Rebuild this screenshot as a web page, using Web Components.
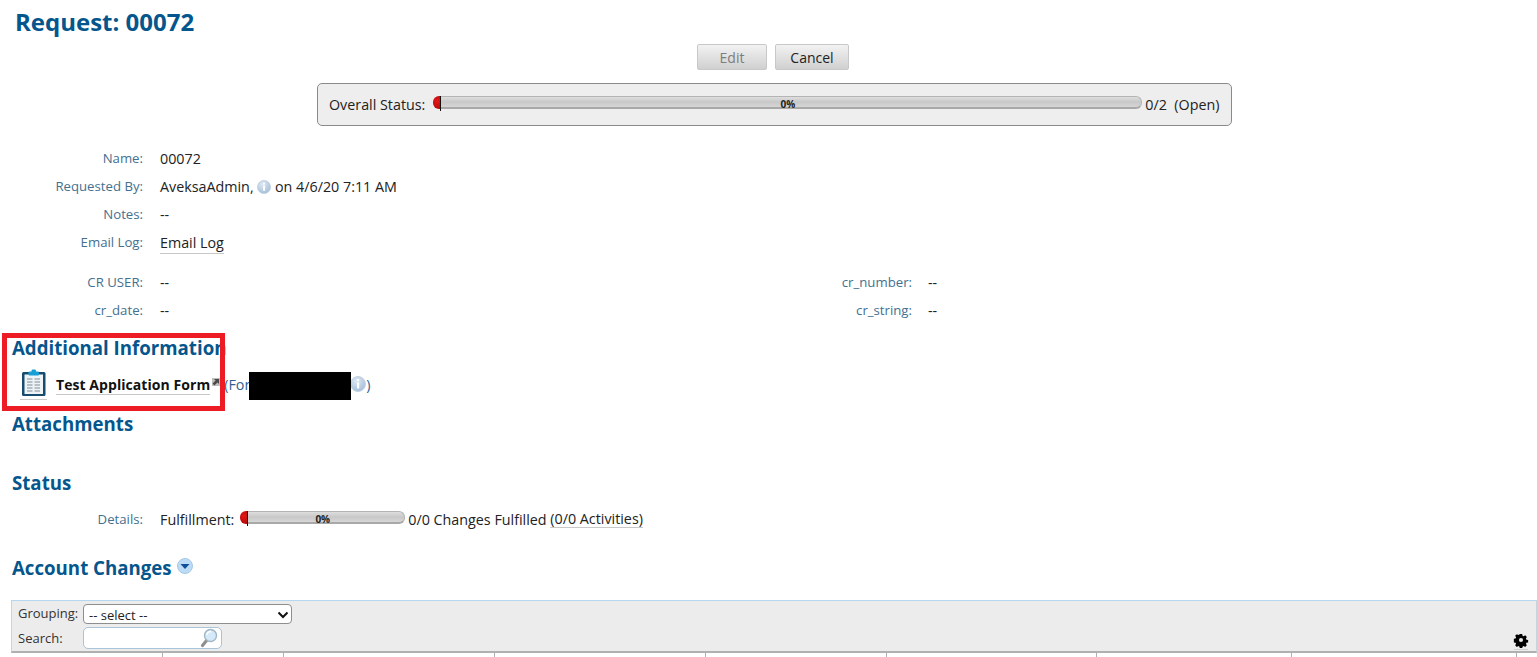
<!DOCTYPE html>
<html>
<head>
<meta charset="utf-8">
<title>Request: 00072</title>
<style>
  html, body { margin: 0; padding: 0; background: #fff; height: 657px; overflow: hidden; }
  body { font-family: "Open Sans", "Liberation Sans", sans-serif; }
</style>
</head>
<body>
<request-page></request-page>

<script>
const infoSvg = size => `
  <svg width="${size}" height="${size}" viewBox="0 0 16 16" style="display:block">
    <defs><radialGradient id="ig" cx="40%" cy="30%" r="80%">
      <stop offset="0" stop-color="#dfe9f4"/><stop offset="1" stop-color="#9db9d6"/>
    </radialGradient></defs>
    <circle cx="8" cy="8" r="7.5" fill="url(#ig)" stroke="#c3d2e2" stroke-width="1"/>
    <rect x="7" y="3" width="2.2" height="2.2" fill="#fff"/>
    <rect x="7" y="6.4" width="2.2" height="6" fill="#fff"/>
  </svg>`;

class InfoIcon extends HTMLElement {
  constructor () {
    super();
    this.attachShadow({ mode: 'open' });
    const size = this.getAttribute('size') || 14;
    this.shadowRoot.innerHTML = `
      <style>:host { display: inline-block; vertical-align: -2px; }</style>
      ${infoSvg(size)}`;
  }
}

class PlainButton extends HTMLElement {
  constructor () {
    super();
    this.attachShadow({ mode: 'open' });
    this.shadowRoot.innerHTML = `
      <style>
        :host {
          display: inline-flex;
          align-items: center;
          justify-content: center;
          box-sizing: border-box;
          height: 26px;
          font-size: 14px;
          color: #222;
          border: 1px solid #c8c8c8;
          border-radius: 2px;
          background: linear-gradient(#f2f2f2, #d0d0d0);
        }
        :host([disabled]) { color: #7d7d7d; }
      </style>
      <slot></slot>`;
  }
}

class StatusBar extends HTMLElement {
  constructor () {
    super();
    this.attachShadow({ mode: 'open' });
    this.shadowRoot.innerHTML = `
      <style>
        :host {
          display: inline-block;
          position: relative;
          box-sizing: border-box;
          height: 13px;
          margin-left: 7px;
          margin-bottom: 4px;
          padding-right: 6px;
          border-top: 1px solid #b4b4b4;
          border-bottom: 2px solid #a8a8a8;
          border-right: 1px solid #b4b4b4;
          border-radius: 0 6px 6px 0;
          background: linear-gradient(#dedede, #c8c8c8 50%, #d6d6d6);
          font-size: 10px;
          font-weight: 700;
          line-height: 14px;
          text-align: center;
          color: #222;
        }
        .cap {
          position: absolute;
          left: -7px;
          top: -1px;
          width: 7px;
          height: 13px;
          border-radius: 6px 0 0 6px;
          background: radial-gradient(circle at 60% 40%, #e41818, #b00606);
        }
        .tick {
          position: absolute;
          left: 0;
          top: -1px;
          width: 1px;
          height: 15px;
          background: #111;
        }
      </style>
      <span class="cap"></span><span class="tick"></span><slot></slot>`;
  }
}

class FieldRow extends HTMLElement {
  constructor () {
    super();
    this.attachShadow({ mode: 'open' });
    this.shadowRoot.innerHTML = `
      <style>
        :host {
          display: grid;
          grid-template-columns: 143px 1fr;
          column-gap: 17px;
          height: 28px;
          align-items: center;
          font-size: 14.3px;
          color: #222;
        }
        .label {
          font-size: 13.2px;
          color: #44708f;
          text-align: right;
        }
      </style>
      <div class="label"><slot name="label"></slot></div>
      <div><slot></slot></div>`;
  }
}

class SectionHeading extends HTMLElement {
  constructor () {
    super();
    this.attachShadow({ mode: 'open' });
    this.shadowRoot.innerHTML = `
      <style>
        :host {
          display: block;
          margin-left: 12px;
          font-size: 18.67px;
          font-weight: 700;
          line-height: 26px;
          color: #04568c;
        }
      </style>
      <slot></slot>`;
  }
}

class DataToolbar extends HTMLElement {
  constructor () {
    super();
    this.attachShadow({ mode: 'open' });
    const ticks = [162, 283, 494, 705, 886, 1096, 1291, 1516]
      .map(x => `<i style="left:${x - 12}px"></i>`).join('');
    this.shadowRoot.innerHTML = `
      <style>
        :host {
          display: block;
          position: relative;
          box-sizing: border-box;
          margin-left: 11px;
          height: 53px;
          background: #ececec;
          border-top: 1px solid #b5d7f0;
          border-left: 1px solid #c6d4de;
          border-right: 1px solid #c6d4de;
          border-bottom: 2px solid #b0b0b0;
          font-size: 13px;
          color: #333;
        }
        .rows {
          display: grid;
          grid-template-columns: 65px 209px;
          row-gap: 3px;
          padding: 3px 0 0 6px;
          align-items: center;
        }
        .select {
          display: flex;
          align-items: center;
          justify-content: space-between;
          box-sizing: border-box;
          height: 20px;
          padding: 1px 2px 0 5px;
          background: #fff;
          border: 1px solid #8e8e8e;
          border-radius: 4px;
          font-size: 13px;
          color: #222;
        }
        .search {
          display: flex;
          align-items: center;
          justify-content: flex-end;
          box-sizing: border-box;
          width: 139px;
          height: 22px;
          padding-right: 3px;
          background: #fff;
          border: 1px solid #a9c4d8;
          border-radius: 5px;
        }
        .gear { position: absolute; right: 7px; bottom: 3px; }
        .gear-line { position: absolute; right: 8px; bottom: 1px; width: 14px; height: 1px; background: #cfcfcf; }
        i {
          position: absolute;
          top: 100%;
          margin-top: 2px;
          width: 1px;
          height: 6px;
          background: #b0b0b0;
        }
      </style>
      <div class="rows">
        <span style="margin-top:-3px">Grouping:</span>
        <div class="select">-- select --
          <svg width="12" height="8" viewBox="0 0 12 8"><path d="M1.5 1.5 6 6l4.5-4.5" fill="none" stroke="#111" stroke-width="2"/></svg>
        </div>
        <span>Search:</span>
        <div class="search">
          <svg width="18" height="20" viewBox="0 0 18 20">
            <line x1="2.5" y1="17.5" x2="7" y2="12" stroke="#8f8f8f" stroke-width="3.2" stroke-linecap="round"/>
            <circle cx="10.5" cy="7.5" r="6" fill="#d6e9f8" stroke="#9fb6c6" stroke-width="1.4"/>
            <path d="M7 7a4 4 0 0 1 4-3.5" fill="none" stroke="#fff" stroke-width="1.4"/>
          </svg>
        </div>
      </div>
      <svg class="gear" width="16" height="16" viewBox="0 0 16 16">
        <path fill="#000" fill-rule="evenodd" d="M6.6 1h2.8l.4 2 1.3.6 1.8-1.1 2 2-1.1 1.8.6 1.3 2 .4v2.8l-2 .4-.6 1.3 1.1 1.8-2 2-1.8-1.1-1.3.6-.4 2H6.6l-.4-2-1.3-.6-1.8 1.1-2-2 1.1-1.8-.6-1.3-2-.4V6.6l2-.4.6-1.3-1.1-1.8 2-2 1.8 1.1 1.3-.6zM8 5.6a2.4 2.4 0 1 0 0 4.8 2.4 2.4 0 0 0 0-4.8z" transform="translate(1.2 1.2) scale(.85)"/>
      </svg>
      <span class="gear-line"></span>
      ${ticks}`;
  }
}

class RequestPage extends HTMLElement {
  constructor () {
    super();
    this.attachShadow({ mode: 'open' });
    this.shadowRoot.innerHTML = `
      <style>
        :host {
          display: block;
          position: relative;
          width: 1537px;
          height: 657px;
          overflow: hidden;
          color: #222;
          font-size: 14.3px;
        }
        h1 {
          margin: 0 0 0 15px;
          padding-top: 7px;
          font-size: 24px;
          font-weight: 700;
          line-height: 30px;
          color: #04568c;
        }
        .actions {
          display: flex;
          justify-content: center;
          gap: 8px;
          margin: 7px 0 0 9px;
        }
        .status-wrap { display: flex; justify-content: center; margin: 13px 0 0 12px; }
        .status {
          display: flex;
          align-items: center;
          box-sizing: border-box;
          width: 915px;
          height: 43px;
          padding-left: 11px;
          background: #eeeeee;
          border: 1px solid #8a8a8a;
          border-radius: 5px;
        }
        .fields { margin-top: 18px; }
        .email { border-bottom: 1px solid #c8c8c8; padding-bottom: 1px; }
        .custom {
          display: grid;
          grid-template-columns: 768px 1fr;
          margin-top: 12px;
        }
        .custom field-row:nth-child(even) { grid-template-columns: 144px 1fr; column-gap: 16px; }
        .form-row {
          display: flex;
          align-items: center;
          height: 30px;
          margin: 8px 0 0 20px;
          color: #2f5f92;
        }
        .form-icon { margin-right: 9px; border-bottom: 1px solid #ccc; padding-bottom: 1px; height: 29px; }
        .form-link {
          font-size: 14px;
          font-weight: 700;
          color: #111;
          letter-spacing: .06px;
          border-bottom: 1px solid #c8c8c8;
          line-height: 19px;
          margin-top: 1px;
        }
        .details { display: flex; align-items: center; }
        .dotted { border-bottom: 1px solid #c8c8c8; line-height: 17px; }
        .toggle { display: inline-block; vertical-align: 1px; margin-left: 1px; }
        .annotation {
          position: absolute;
          left: 2px;
          top: 333px;
          width: 223px;
          height: 78px;
          box-sizing: border-box;
          border: 5px solid #ed1c24;
        }
        .redact {
          position: absolute;
          left: 249px;
          top: 372px;
          width: 102px;
          height: 28px;
          background: #000;
        }
      </style>
      <h1>Request: 00072</h1>
      <div class="actions">
        <plain-button disabled style="width:70px">Edit</plain-button>
        <plain-button style="width:74px">Cancel</plain-button>
      </div>
      <div class="status-wrap">
        <div class="status">
          <span>Overall Status:</span>
          <status-bar style="width:702px;margin-left:15px">0%</status-bar>
          <span style="margin-left:3px">0/2&nbsp; (Open)</span>
        </div>
      </div>

      <div class="fields">
        <field-row><span slot="label">Name:</span>00072</field-row>
        <field-row><span slot="label">Requested By:</span>AveksaAdmin, <info-icon></info-icon> on 4/6/20 7:11 AM</field-row>
        <field-row><span slot="label">Notes:</span>--</field-row>
        <field-row><span slot="label">Email Log:</span><span class="email">Email Log</span></field-row>
      </div>
      <div class="custom">
        <field-row><span slot="label">CR USER:</span>--</field-row>
        <field-row><span slot="label">cr_number:</span>--</field-row>
        <field-row><span slot="label">cr_date:</span>--</field-row>
        <field-row><span slot="label">cr_string:</span>--</field-row>
      </div>

      <section-heading style="margin-top:11px">Additional Information</section-heading>
      <div class="form-row">
        <svg class="form-icon" width="27" height="29" viewBox="0 0 27 29">
          <rect x="2" y="3" width="23.5" height="24" rx="1.5" fill="#174c6e"/>
          <rect x="4.5" y="5.5" width="18.5" height="19.5" fill="#eef3f6"/>
          <rect x="8.5" y="2.5" width="10.5" height="4" rx="1" fill="#169fd6"/>
          <rect x="11.5" y="0.5" width="4.5" height="3" rx="1.2" fill="#169fd6"/>
          <path d="M7 10h5.5M14.5 10h5.5M7 13h5.5M14.5 13h5.5M7 16h5.5M14.5 16h5.5M7 19h5.5M14.5 19h5.5M7 22h5.5M14.5 22h5.5" stroke="#a4b0b8" stroke-width="1.3"/>
        </svg>
        <span class="form-link">Test Application Form</span>
        <svg width="8" height="8" viewBox="0 0 8 8" style="margin:-4px 0 0 2px">
          <rect width="8" height="8" fill="#bdbdbd"/>
          <path d="M2 1h5v5L5.4 4.4 2.4 7.4.6 5.6l3-3z" fill="#4a4a4a"/>
        </svg>
        <span style="margin-left:4px">(For</span>
        <span style="margin-left:100px;display:inline-flex"><info-icon size="16"></info-icon></span><span>)</span>
      </div>
      <section-heading style="margin-top:12px">Attachments</section-heading>
      <section-heading style="margin-top:33px">Status</section-heading>
      <field-row style="margin-top:9px">
        <span slot="label">Details:</span>
        <div class="details">
          Fulfillment:
          <status-bar style="width:158px;margin-left:13px;margin-right:3px">0%</status-bar>
          0/0 Changes Fulfilled&nbsp;<span class="dotted">(0/0 Activities)</span>
        </div>
      </field-row>
      <section-heading style="margin-top:22px">Account Changes
        <svg class="toggle" width="16" height="16" viewBox="0 0 16 16">
          <circle cx="8" cy="8" r="7.5" fill="#bcdcf6" stroke="#a6c8e4"/>
          <path d="M3.5 6h9L8 11z" fill="#0f4f9a"/>
        </svg>
      </section-heading>
      <data-toolbar style="margin-top:19px"></data-toolbar>

      <div class="annotation"></div>
      <div class="redact"></div>`;
  }
}

customElements.define('info-icon', InfoIcon);
customElements.define('plain-button', PlainButton);
customElements.define('status-bar', StatusBar);
customElements.define('field-row', FieldRow);
customElements.define('section-heading', SectionHeading);
customElements.define('data-toolbar', DataToolbar);
customElements.define('request-page', RequestPage);
</script>
</body>
</html>
